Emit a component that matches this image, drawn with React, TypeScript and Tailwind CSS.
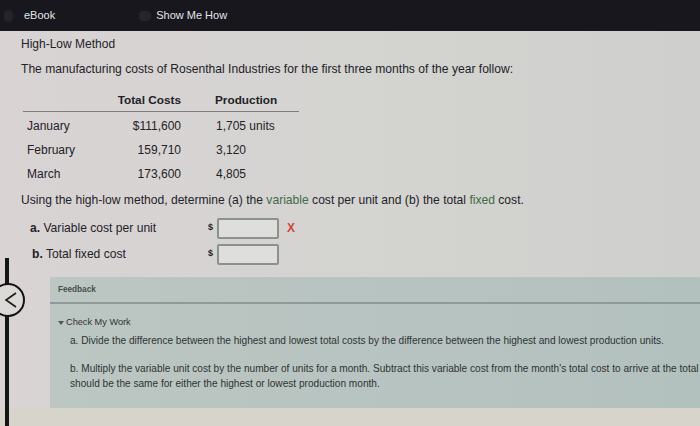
import React from 'react';

const rows = [
  { month: 'January', cost: '$111,600', units: '1,705 units' },
  { month: 'February', cost: '159,710', units: '3,120' },
  { month: 'March', cost: '173,600', units: '4,805' },
];

const App = () => {
  return (
    <div
      className="relative w-[700px] h-[426px] overflow-hidden bg-gradient-to-r from-[#d9d3d4] via-[#d4d4d1] to-[#cfd0cd] text-[#232229]"
      style={{ fontFamily: '"Liberation Sans", Arial, sans-serif' }}
    >
      {/* Top bar */}
      <div className="h-[31px] bg-[#18171e] flex items-center text-[11px] text-[#e4e4e8]">
        <div className="w-[9px] h-[12px] ml-[4px] rounded-sm bg-[#24232a]" />
        <span className="ml-[11px]">eBook</span>
        <div className="w-[12px] h-[10px] ml-[84px] rounded-sm bg-[#26252c]" />
        <span className="ml-[5px]">Show Me How</span>
      </div>

      <div className="pl-[21px]">
        <div className="h-[26px] flex items-center text-[12px]">High-Low Method</div>
        <div className="h-[24px] flex items-center text-[12.1px]">
          The manufacturing costs of Rosenthal Industries for the first three months of the year follow:
        </div>

        {/* Table */}
        <div className="mt-[10px] w-[276px] ml-[2px]">
          <div className="h-[21px] flex items-center border-b border-[#7d7d80] text-[11.8px] font-bold">
            <div className="w-[92px]" />
            <div className="w-[66px] text-right">Total Costs</div>
            <div className="ml-[34px]">Production</div>
          </div>
          <div className="mt-[2px]">
            {rows.map((r) => (
              <div key={r.month} className="h-[24px] flex items-center text-[12px]">
                <div className="w-[92px] pl-[4px]">{r.month}</div>
                <div className="w-[66px] text-right">{r.cost}</div>
                <div className="ml-[35px]">{r.units}</div>
              </div>
            ))}
          </div>
        </div>

        <div className="mt-[4px] h-[20px] flex items-center text-[12.1px]">
          <span>
            Using the high-low method, determine (a) the <span className="text-[#3f6b45]">variable</span> cost per unit and (b) the total{' '}
            <span className="text-[#3f6b45]">fixed</span> cost.
          </span>
        </div>

        <div className="mt-[5px] h-[26px] flex items-center text-[12.1px]">
          <div className="w-[187px] pl-[9px]">
            <span className="font-bold">a.</span> Variable cost per unit
          </div>
          <span className="text-[9px] font-bold w-[9px]">$</span>
          <div className="w-[62px] h-[21px] border-2 border-[#8d918c] rounded-[2px] bg-[#dedfdc]" />
          <span className="ml-[8px] text-[#d2453a] font-bold text-[12px]">X</span>
        </div>
        <div className="h-[26px] flex items-center text-[12.1px]">
          <div className="w-[187px] pl-[11px]">
            <span className="font-bold">b.</span> Total fixed cost
          </div>
          <span className="text-[9px] font-bold w-[9px]">$</span>
          <div className="w-[62px] h-[21px] border-2 border-[#8d918c] rounded-[2px] bg-[#dedfdc]" />
        </div>
      </div>

      {/* Feedback panel */}
      <div className="mt-[10px] ml-[50px] h-[131px] bg-gradient-to-r from-[#bcc6c3] to-[#b3c1be] text-[#2f3333]">
        <div className="h-[27px] flex items-center pl-[8px] pt-[2px] border-b-2 border-[#8e9998] text-[8.2px] font-bold text-[#4a4d4d]">
          Feedback
        </div>
        <div className="pl-[8px] pt-[14px] flex items-center text-[9.2px] h-[24px]">
          <svg width="6" height="6" viewBox="0 0 6 6" className="mr-[2px]">
            <path d="M0 1 L6 1 L3 5 Z" fill="#555" />
          </svg>
          Check My Work
        </div>
        <div className="pl-[20px] text-[10.1px] whitespace-nowrap">
          <div className="h-[16px] mt-[5px] flex items-center">
            a. Divide the difference between the highest and lowest total costs by the difference between the highest and lowest production units.
          </div>
          <div className="h-[15px] mt-[12px] flex items-center">
            b. Multiply the variable unit cost by the number of units for a month. Subtract this variable cost from the month's total cost to arrive at the total fixed cost, which
          </div>
          <div className="h-[15px] flex items-center">
            should be the same for either the highest or lowest production month.
          </div>
        </div>
      </div>
      <div className="h-[18px] bg-[#d7d4cb]" />

      {/* Back button overlay on the left edge */}
      <div className="absolute left-[5px] top-[258px] w-[4px] h-[170px] bg-[#141414]" />
      <div className="absolute left-[-9px] top-[283px] w-[34px] h-[34px] rounded-full border-2 border-[#141414] bg-[#dcdad6] flex items-center justify-center">
        <svg width="16" height="18" viewBox="0 0 16 18" className="ml-[6px]">
          <path d="M13 2 L3 9 L13 16" fill="none" stroke="#1a1a1a" strokeWidth="1.6" />
        </svg>
      </div>
    </div>
  );
};

export default App;
